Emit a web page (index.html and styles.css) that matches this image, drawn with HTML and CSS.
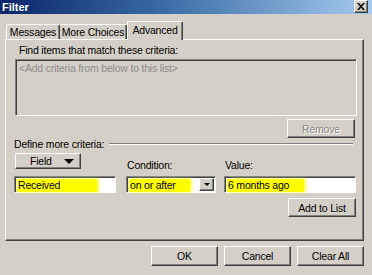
FILE: index.html
```html
<!DOCTYPE html>
<html>
<head>
<meta charset="utf-8">
<link rel="stylesheet" href="styles.css">
</head>
<body>
<div class="titlebar">
  <span class="title">Filter</span>
  <span class="close">
    <svg width="8" height="7" viewBox="0 0 8 7"><path d="M0 0h2l2 2.2L6 0h2L5 3.5 8 7H6L4 4.8 2 7H0l3-3.5z" fill="#000"/></svg>
  </span>
</div>
<div class="tabs">
  <div class="tab tab-messages">Messages</div>
  <div class="tab tab-more">More Choices</div>
  <div class="tab tab-adv active">Advanced</div>
</div>
<div class="panel">
  <div class="find-label">Find items that match these criteria:</div>
  <div class="listbox"><span class="placeholder">&lt;Add criteria from below to this list&gt;</span></div>
  <div class="remove-row"><div class="btn btn-remove disabled">Remove</div></div>
  <div class="define-row"><span>Define more criteria:</span><span class="etch"></span></div>
  <div class="criteria">
    <div class="col col-field">
      <div class="btn btn-field"><span>Field</span><span class="tri"></span></div>
      <div class="input input-field"><span class="hl hl-field">Received</span></div>
    </div>
    <div class="col col-cond">
      <div class="lbl">Condition:</div>
      <div class="input combo"><span class="hl hl-cond">on or after</span><span class="drop"><span class="tri small"></span></span></div>
    </div>
    <div class="col col-val">
      <div class="lbl">Value:</div>
      <div class="input input-val"><span class="hl hl-val">6 months ago</span></div>
      <div class="btn btn-add">Add to List</div>
    </div>
  </div>
</div>
<div class="footer">
  <div class="btn btn-foot">OK</div>
  <div class="btn btn-foot">Cancel</div>
  <div class="btn btn-foot">Clear All</div>
</div>
</body>
</html>
```
FILE: styles.css
```css
* { box-sizing: border-box; }
html, body { margin: 0; padding: 0; }
body {
  width: 372px;
  height: 275px;
  overflow: hidden;
  background: #d4d0c8;
  font-family: "Liberation Sans", Arial, sans-serif;
  font-size: 10.5px;
  letter-spacing: -0.2px;
  color: #000;
  white-space: nowrap;
}
.titlebar {
  height: 14px;
  background: linear-gradient(to right, #0a246a 0%, #3a6ea5 45%, #a6caf0 100%);
  display: flex;
  align-items: center;
  justify-content: space-between;
  padding: 0 4px 0 2px;
}
.title {
  color: #fff;
  font-weight: bold;
  font-size: 11px;
  letter-spacing: 0;
  line-height: 14px;
}
.close {
  width: 14px;
  height: 13px;
  margin-top: -1px;
  background: #d4d0c8;
  border: 1px solid;
  border-color: #fff #404040 #404040 #fff;
  box-shadow: inset -1px -1px #808080;
  display: flex;
  align-items: center;
  justify-content: center;
}
.tabs {
  display: flex;
  align-items: flex-end;
  height: 18px;
  margin-top: 7px;
  padding-left: 6px;
  position: relative;
  z-index: 1;
}
.tab {
  height: 15px;
  line-height: 14px;
  border: 1px solid;
  border-color: #fff #404040 transparent #fff;
  box-shadow: inset -1px 0 #808080;
  border-bottom: none;
  text-align: center;
  border-radius: 2px 2px 0 0;
}
.tab-messages { width: 54px; }
.tab-more { width: 67px; border-left: none; }
.tab-adv { width: 56px; }
.tab.active {
  height: 19px;
  margin-bottom: -1px;
  background: #d4d0c8;
  line-height: 16px;
}
.panel {
  margin-left: 5px;
  width: 359px;
  height: 202px;
  border: 1px solid;
  border-color: #fff #404040 #404040 #fff;
  box-shadow: inset -1px -1px #808080;
  padding: 4px 7px 0 8px;
}
.find-label {
  line-height: 13px;
  padding-left: 5px;
}
.listbox {
  margin-top: 2px;
  margin-left: 1px;
  height: 57px;
  width: 342px;
  border: 1px solid;
  border-color: #808080 #fff #fff #808080;
  box-shadow: inset 1px 1px #404040;
  padding: 2px 0 0 3px;
}
.placeholder { color: #8c8c8c; line-height: 13px; }
.remove-row {
  display: flex;
  justify-content: flex-end;
  margin-top: 3px;
  padding-right: 1px;
}
.btn {
  background: #d4d0c8;
  border: 1px solid;
  border-color: #fff #404040 #404040 #fff;
  box-shadow: inset -1px -1px #808080;
  display: flex;
  align-items: center;
  justify-content: center;
}
.btn-remove { width: 68px; height: 19px; }
.disabled { color: #8a8a8a; text-shadow: 1px 1px #fff; }
.define-row {
  display: flex;
  align-items: center;
  line-height: 12px;
  padding-right: 3px;
}
.etch {
  flex: 1;
  height: 2px;
  margin-left: 5px;
  border-top: 1px solid #808080;
  border-bottom: 1px solid #fff;
}
.criteria {
  display: flex;
  margin-top: 3px;
}
.col { display: flex; flex-direction: column; }
.col-field { width: 102px; }
.col-cond { width: 90px; margin-left: 10px; }
.col-val { width: 132px; margin-left: 8px; }
.lbl {
  line-height: 13px;
  height: 13px;
  margin-top: 6px;
  padding-left: 1px;
}
.btn-field {
  width: 66px;
  height: 16px;
  margin-left: 1px;
  margin-bottom: 3px;
  justify-content: space-between;
  padding: 0 6px 0 14px;
}
.tri {
  width: 0;
  height: 0;
  border-left: 5px solid transparent;
  border-right: 5px solid transparent;
  border-top: 5px solid #000;
}
.tri.small {
  border-left-width: 3px;
  border-right-width: 3px;
  border-top-width: 3px;
}
.input {
  height: 17px;
  background: #fff;
  border: 1px solid;
  border-color: #808080 #fff #fff #808080;
  box-shadow: inset 1px 1px #404040;
  padding: 2px 0 0 2px;
  display: flex;
  align-items: stretch;
  margin-top: 4px;
}
.hl {
  background: #ffff00;
  line-height: 13px;
  padding-left: 1px;
  box-shadow: 2px 0 3px #ffff40;
}
.hl-field { width: 80px; }
.hl-cond { width: 61px; }
.hl-val { width: 77px; }
.combo { position: relative; }
.drop {
  position: absolute;
  right: 1px;
  top: 1px;
  width: 15px;
  height: 13px;
  background: #d4d0c8;
  border: 1px solid;
  border-color: #fff #404040 #404040 #fff;
  box-shadow: inset -1px -1px #808080;
  display: flex;
  align-items: center;
  justify-content: center;
}
.btn-add {
  width: 68px;
  height: 19px;
  align-self: flex-end;
  margin-top: 5px;
}
.footer {
  display: flex;
  justify-content: flex-end;
  gap: 6px;
  margin-top: 5px;
  padding-right: 8px;
}
.btn-foot { width: 67px; height: 20px; }
```
